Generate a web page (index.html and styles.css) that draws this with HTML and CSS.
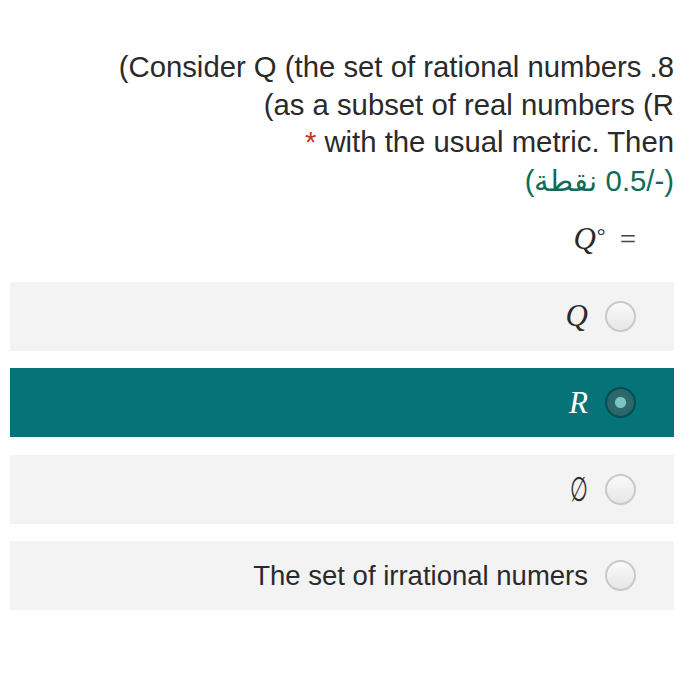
FILE: index.html
```html
<!DOCTYPE html>
<html lang="en">
<head>
<meta charset="utf-8">
<link rel="stylesheet" href="styles.css">
</head>
<body>
<div class="page">
  <div class="question">
    <div class="line">(Consider Q (the set of rational numbers .8</div>
    <div class="line">(as a subset of real numbers (R</div>
    <div class="line"><span class="req">*</span> with the usual metric. Then</div>
    <div class="line points">(<bdi lang="ar">نقطة</bdi> 0.5/-)</div>
  </div>
  <div class="formula"><span class="mi">Q</span><span class="deg">°</span><span class="eq">=</span></div>
  <div class="options">
    <div class="opt"><span class="mi lbl">Q</span><span class="radio"></span></div>
    <div class="opt sel"><span class="mi lbl">R</span><span class="radio on"></span></div>
    <div class="opt"><span class="lbl empty">∅</span><span class="radio"></span></div>
    <div class="opt"><span class="lbl txt">The set of irrational numers</span><span class="radio"></span></div>
  </div>
</div>
</body>
</html>
```
FILE: styles.css
```css
html, body { margin: 0; padding: 0; background: #fff; }
.page {
  width: 700px;
  height: 684px;
  font-family: "Liberation Sans", Arial, sans-serif;
  color: #2a2a2a;
}
.question {
  padding: 48px 26px 0 0;
  text-align: right;
  font-size: 29.3px;
  line-height: 37.5px;
}
.line { white-space: nowrap; }
.req { color: #c0392b; }
.points { color: #0f6b58; line-height: 40px; }
.formula {
  display: flex;
  justify-content: flex-end;
  align-items: baseline;
  padding: 20px 64px 0 0;
  height: 58px;
  font-size: 29px;
}
.mi { font-family: "Liberation Serif", "Times New Roman", serif; font-style: italic; }
.formula .mi { font-size: 31px; }
.deg { font-family: "Liberation Serif", serif; font-size: 22px; position: relative; top: -6px; margin-left: 1px; }
.eq { font-family: "Liberation Serif", serif; margin-left: 14px; color: #444; }
.options {
  display: flex;
  flex-direction: column;
  gap: 17.5px;
  margin: 0 26px 0 10px;
  padding-top: 3px;
}
.opt {
  height: 69px;
  background: #f3f3f3;
  display: flex;
  justify-content: flex-end;
  align-items: center;
  gap: 17px;
  padding-right: 38px;
}
.opt.sel { background: #057378; }
.lbl { font-size: 27.5px; color: #2a2a2a; }
.mi.lbl { font-size: 31px; }
.sel .lbl { color: #fff; }
.empty {
  font-family: "DejaVu Sans", sans-serif;
  font-size: 34px;
  line-height: 1;
  display: inline-block;
  transform: scaleX(0.6);
  margin: 0 -6px 0 -6px;
}
.txt { font-family: "Liberation Sans", Arial, sans-serif; }
.radio {
  width: 27px;
  height: 27px;
  border-radius: 50%;
  border: 2px solid #c9c9c9;
  background: linear-gradient(#fafafa, #e6e6e6);
  flex: none;
}
.radio.on {
  border: 2px solid #034f53;
  background: radial-gradient(circle, #7fc4c4 0 5px, #2e6b6f 6px, #245f63 100%);
}
```
